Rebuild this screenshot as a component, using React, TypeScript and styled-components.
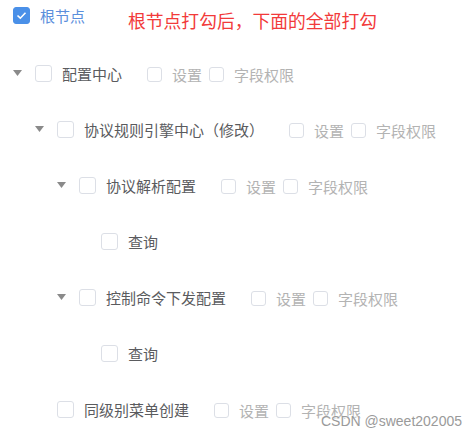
import React from 'react'
import styled, { createGlobalStyle } from 'styled-components'

const GlobalStyle = createGlobalStyle`
  html, body {
    margin: 0;
    padding: 0;
    background: #fff;
  }
  body {
    font-family: "Noto Sans CJK SC", "Noto Sans", sans-serif;
  }
`

const Page = styled.div`
  position: relative;
  width: 474px;
  height: 436px;
  overflow: hidden;
  background: #fff;
`

const Header = styled.div`
  display: flex;
  align-items: center;
  height: 30px;
  padding-left: 13px;
  margin-bottom: 15px;
`

const RootLabel = styled.span`
  margin-left: 10px;
  font-size: 15px;
  color: #5b8fdc;
  line-height: 1;
`

const Note = styled.span`
  margin-left: 43px;
  margin-top: 11px;
  font-size: 17.8px;
  color: #f23a3a;
  line-height: 1;
  white-space: nowrap;
`

const Row = styled.div<{ $level: number }>`
  display: flex;
  align-items: center;
  height: 56px;
  padding-left: ${(p) => 11 + p.$level * 22}px;
  white-space: nowrap;
`

const Toggle = styled.span`
  display: flex;
  align-items: center;
  width: 24px;
  height: 17px;
  padding-left: 2px;
  box-sizing: border-box;
`

const Box = styled.span<{ $size: number; $checked?: boolean }>`
  display: inline-flex;
  align-items: center;
  justify-content: center;
  flex: none;
  width: ${(p) => p.$size}px;
  height: ${(p) => p.$size}px;
  box-sizing: border-box;
  border: 1px solid ${(p) => (p.$checked ? '#4a90e8' : '#dcdfe6')};
  border-radius: 3px;
  background: ${(p) => (p.$checked ? '#4a90e8' : '#fff')};
`

const Label = styled.span`
  margin-left: 10px;
  font-size: 15px;
  color: #5a5b5e;
  line-height: 1;
`

const Options = styled.span`
  display: flex;
  align-items: center;
  margin-left: 25px;
  margin-top: 3px;
`

const Option = styled.span`
  display: flex;
  align-items: center;
  margin-right: 7px;
`

const OptionLabel = styled.span`
  margin-left: 10px;
  font-size: 15px;
  color: #b3b3b3;
  line-height: 1;
`

const Watermark = styled.div`
  position: absolute;
  right: 12px;
  bottom: 7px;
  font-family: "Liberation Sans", Arial, sans-serif;
  font-size: 14px;
  color: #9a9a9a;
  text-shadow: 0 0 2px #fff, 0 0 2px #fff;
`

const Caret = () => (
  <svg width="9" height="6" viewBox="0 0 9 6">
    <path d="M0 0 L9 0 L4.5 6 Z" fill="#8a8a8a" />
  </svg>
)

const Check = () => (
  <svg width="11" height="9" viewBox="0 0 11 9">
    <path d="M1.5 4.5 L4.3 7.2 L9.5 1.8" fill="none" stroke="#fff" strokeWidth="1.6" />
  </svg>
)

type Node = { label: string; level: number; expand?: boolean; options?: boolean }

const nodes: Node[] = [
  { label: '配置中心', level: 0, expand: true, options: true },
  { label: '协议规则引擎中心（修改）', level: 1, expand: true, options: true },
  { label: '协议解析配置', level: 2, expand: true, options: true },
  { label: '查询', level: 3 },
  { label: '控制命令下发配置', level: 2, expand: true, options: true },
  { label: '查询', level: 3 },
  { label: '同级别菜单创建', level: 1, options: true },
]

const App = () => {
  return (
    <>
      <GlobalStyle />
      <Page>
        <Header>
          <Box $size={17} $checked>
            <Check />
          </Box>
          <RootLabel>根节点</RootLabel>
          <Note>根节点打勾后，下面的全部打勾</Note>
        </Header>
        {nodes.map((n, i) => (
          <Row key={i} $level={n.level}>
            <Toggle>{n.expand && <Caret />}</Toggle>
            <Box $size={17} />
            <Label>{n.label}</Label>
            {n.options && (
              <Options>
                <Option>
                  <Box $size={15} />
                  <OptionLabel>设置</OptionLabel>
                </Option>
                <Option>
                  <Box $size={15} />
                  <OptionLabel>字段权限</OptionLabel>
                </Option>
              </Options>
            )}
          </Row>
        ))}
        <Watermark>CSDN @sweet202005</Watermark>
      </Page>
    </>
  )
}

export default App
